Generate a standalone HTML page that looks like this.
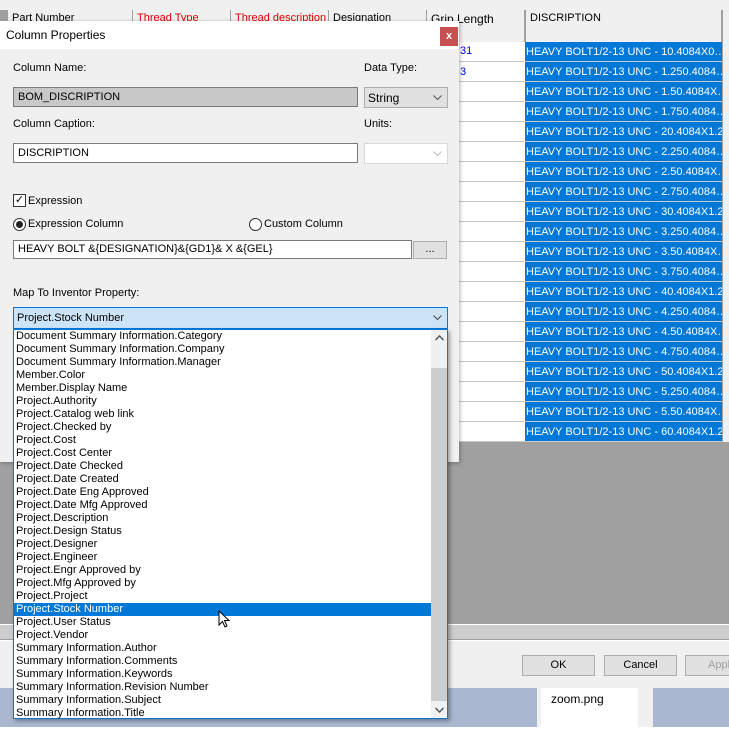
<!DOCTYPE html>
<html><head><meta charset="utf-8"><style>
*{box-sizing:border-box;margin:0;padding:0}
body{width:729px;height:745px;position:relative;overflow:hidden;background:#fff;font-family:"Liberation Sans",sans-serif;font-size:11px;color:#000}
.a{position:absolute}
.hd{position:absolute;top:10px;height:32px;border-right:1px solid #a0a0a0;background:#f0f0f0;padding:2px 4px;white-space:nowrap;overflow:hidden}
.row{position:absolute;left:8px;width:714px;height:20px;border-bottom:1px solid #c8c8c8;background:#fff}
.sel{position:absolute;left:525px;top:0;width:197px;height:19px;background:#0078d7;color:#fff;padding:4px 1px 0;white-space:nowrap;overflow:hidden;font-size:11px}
.lbl{position:absolute;font-size:11px}
.box{position:absolute;border:1px solid #7a7a7a;background:#fff;padding:3px 4px;font-size:11px}
.li{height:13px;line-height:13px;padding-left:2px;white-space:nowrap}
.btn{position:absolute;top:655px;height:21px;width:73px;border:1px solid #adadad;background:#e1e1e1;text-align:center;line-height:19px;font-size:11px}
.chev{position:absolute;right:5px;top:7px}
</style></head><body>
<div class="a" style="left:0;top:0;width:729px;height:10px;background:#f0f0f0"></div>
<div class="a" style="left:0;top:10px;width:729px;height:615px;background:#a0a0a0"></div>
<div class="a" style="left:722px;top:10px;width:7px;height:432px;background:#f0f0f0;border-left:1px solid #a0a0a0"></div>
<div class="hd" style="left:8px;width:125px">Part Number</div>
<div class="hd" style="left:133px;width:98px;color:#e00000">Thread Type</div>
<div class="hd" style="left:231px;width:98px;color:#e00000">Thread description</div>
<div class="hd" style="left:329px;width:98px">Designation</div>
<div class="hd" style="left:427px;width:98px;font-size:12px">Grip Length</div>
<div class="hd" style="left:525px;width:197px;border-left:1px solid #a0a0a0">DISCRIPTION</div>
<div id="rows"></div>
<script>
var t=["10.4084X0…","1.250.4084…","1.50.4084X…","1.750.4084…","20.4084X1.25","2.250.4084…","2.50.4084X…","2.750.4084…","30.4084X1.25","3.250.4084…","3.50.4084X…","3.750.4084…","40.4084X1.25","4.250.4084…","4.50.4084X…","4.750.4084…","50.4084X1.25","5.250.4084…","5.50.4084X…","60.4084X1.25"];
var h="";for(var i=0;i<20;i++){h+='<div class="row" style="top:'+(42+i*20)+'px"><div class="sel" style="left:517px">HEAVY BOLT1/2-13 UNC - '+t[i]+'</div></div>';}
document.getElementById("rows").innerHTML=h;
</script>
<div class="a" style="left:460px;top:45px;color:#0000e0">31</div>
<div class="a" style="left:460px;top:66px;color:#0000e0">3</div>
<div class="a" style="left:0;top:624px;width:729px;height:1px;background:#fff"></div>
<div class="a" style="left:0;top:625px;width:729px;height:15px;background:#cdcdcd;border-bottom:1px solid #a0a0a0"></div>
<div class="a" style="left:0;top:641px;width:729px;height:47px;background:#f0f0f0"></div>
<div class="btn" style="left:522px">OK</div>
<div class="btn" style="left:604px">Cancel</div>
<div class="btn" style="left:685px;color:#a0a0a0;text-align:left;padding-left:22px;width:60px">Appl</div>
<div class="a" style="left:0;top:688px;width:729px;height:39px;background:#a9b8d0"></div>
<div class="a" style="left:537px;top:688px;width:116px;height:39px;background:#f0f0f0"></div>
<div class="a" style="left:541px;top:688px;width:97px;height:39px;background:#fff;padding:4px 10px;font-size:12px">zoom.png</div>
<div class="a" style="left:0;top:21px;width:459px;height:441px;background:#f0f0f0;box-shadow:1px 1px 4px rgba(0,0,0,.3)"></div>
<div class="a" style="left:0;top:21px;width:459px;height:28px;background:#fff;font-size:12px;padding:7px 6px">Column Properties</div>
<div class="a" style="left:440px;top:27px;width:18px;height:19px;background:#c75050;color:#fff;font-weight:bold;text-align:center;line-height:18px;font-size:11px">x</div>
<div class="lbl" style="left:13px;top:62px">Column Name:</div>
<div class="lbl" style="left:364px;top:62px">Data Type:</div>
<div class="box" style="left:13px;top:87px;width:345px;height:20px;background:#c8c8c8">BOM_DISCRIPTION</div>
<div class="box" style="left:364px;top:87px;width:84px;height:21px;background:#e1e1e1;border-color:#adadad;font-size:12px;padding:3px 3px">String<svg class="chev" width="9" height="6"><path d="M0.5 0.5 L4.5 4.5 L8.5 0.5" fill="none" stroke="#555"/></svg></div>
<div class="lbl" style="left:13px;top:118px">Column Caption:</div>
<div class="lbl" style="left:364px;top:118px">Units:</div>
<div class="box" style="left:13px;top:143px;width:345px;height:20px">DISCRIPTION</div>
<div class="box" style="left:364px;top:143px;width:84px;height:21px;border-color:#d8d8d8"><svg class="chev" width="9" height="6"><path d="M0.5 0.5 L4.5 4.5 L8.5 0.5" fill="none" stroke="#bbb"/></svg></div>
<div class="a" style="left:13px;top:194px;width:13px;height:13px;border:1px solid #333;background:#fff;font-size:11px;line-height:11px;text-align:center">&#10003;</div>
<div class="lbl" style="left:28px;top:195px">Expression</div>
<div class="a" style="left:13px;top:218px;width:13px;height:13px;border:1px solid #333;border-radius:50%;background:#fff"><div style="position:absolute;left:2px;top:2px;width:7px;height:7px;border-radius:50%;background:#222"></div></div>
<div class="lbl" style="left:28px;top:218px">Expression Column</div>
<div class="a" style="left:249px;top:218px;width:13px;height:13px;border:1px solid #333;border-radius:50%;background:#fff"></div>
<div class="lbl" style="left:264px;top:218px">Custom Column</div>
<div class="box" style="left:13px;top:240px;width:399px;height:19px;padding:2px 4px">HEAVY BOLT &amp;{DESIGNATION}&amp;{GD1}&amp; X &amp;{GEL}</div>
<div class="a" style="left:413px;top:241px;width:34px;height:18px;border:1px solid #adadad;background:#e1e1e1;text-align:center;line-height:14px">...</div>
<div class="lbl" style="left:13px;top:287px">Map To Inventor Property:</div>
<div class="box" style="left:13px;top:307px;width:435px;height:22px;background:#cce4f7;border-color:#0078d7;font-size:11px;padding:4px 3px">Project.Stock Number<svg class="chev" width="9" height="6" style="top:7px"><path d="M0.5 0.5 L4.5 4.5 L8.5 0.5" fill="none" stroke="#444"/></svg></div>
<div class="a" style="left:13px;top:329px;width:435px;height:390px;border:1px solid #0078d7;background:#fff;box-shadow:2px 2px 4px rgba(0,0,0,.35)">
<div style="position:absolute;left:0;top:0;width:417px">
<div class="li">Document Summary Information.Category</div><div class="li">Document Summary Information.Company</div><div class="li">Document Summary Information.Manager</div><div class="li">Member.Color</div><div class="li">Member.Display Name</div><div class="li">Project.Authority</div><div class="li">Project.Catalog web link</div><div class="li">Project.Checked by</div><div class="li">Project.Cost</div><div class="li">Project.Cost Center</div><div class="li">Project.Date Checked</div><div class="li">Project.Date Created</div><div class="li">Project.Date Eng Approved</div><div class="li">Project.Date Mfg Approved</div><div class="li">Project.Description</div><div class="li">Project.Design Status</div><div class="li">Project.Designer</div><div class="li">Project.Engineer</div><div class="li">Project.Engr Approved by</div><div class="li">Project.Mfg Approved by</div><div class="li">Project.Project</div><div class="li" style="background:#0078d7;color:#fff">Project.Stock Number</div><div class="li">Project.User Status</div><div class="li">Project.Vendor</div><div class="li">Summary Information.Author</div><div class="li">Summary Information.Comments</div><div class="li">Summary Information.Keywords</div><div class="li">Summary Information.Revision Number</div><div class="li">Summary Information.Subject</div><div class="li">Summary Information.Title</div>
</div>
<div style="position:absolute;left:417px;top:0;width:16px;height:388px;background:#f0f0f0">
<div style="position:absolute;left:0;top:38px;width:16px;height:333px;background:#cdcdcd"></div>
<svg style="position:absolute;left:4px;top:5px" width="9" height="6"><path d="M0.5 5 L4.5 1 L8.5 5" fill="none" stroke="#555" stroke-width="1.5"/></svg>
<svg style="position:absolute;left:4px;bottom:5px" width="9" height="6"><path d="M0.5 1 L4.5 5 L8.5 1" fill="none" stroke="#555" stroke-width="1.5"/></svg>
</div>
</div>
<svg class="a" style="left:218px;top:610px" width="14" height="20" viewBox="0 0 14 20"><path d="M1 1 L1 15 L4.5 11.5 L7 17 L9 16 L6.5 10.5 L11 10.5 Z" fill="#fff" stroke="#000" stroke-width="1"/></svg>
</body></html>
